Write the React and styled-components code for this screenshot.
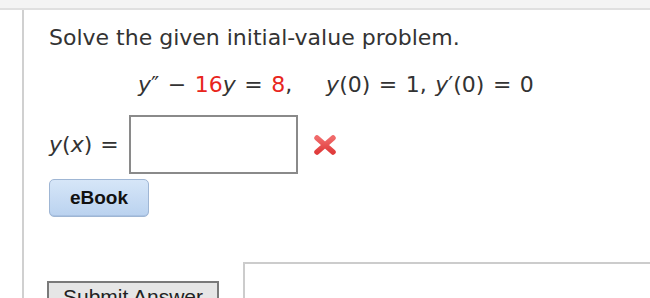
import React from "react";
import styled, { createGlobalStyle } from "styled-components";

const Global = createGlobalStyle`
  html, body { margin: 0; padding: 0; background: #fff; overflow: hidden; }
  body { width: 650px; height: 298px; }
`;

const Page = styled.div`
  width: 650px;
  height: 298px;
  overflow: hidden;
  display: flex;
  flex-direction: column;
`;

const TopBand = styled.div`
  height: 8px;
  flex: none;
  background: #f4f4f4;
  border-bottom: 2px solid #e0e0e0;
`;

const Body = styled.div`
  flex: 1;
  margin-left: 22px;
  border-left: 2px solid #d0d0d0;
  padding-left: 25px;
  display: flex;
  flex-direction: column;
`;

const Title = styled.div`
  font-family: "DejaVu Sans", Verdana, sans-serif;
  font-size: 22px;
  color: #333;
  margin-top: 14px;
  line-height: 28px;
`;

const Equation = styled.div`
  font-family: "DejaVu Sans", Verdana, sans-serif;
  font-size: 22px;
  color: #333;
  margin-top: 19px;
  padding-left: 89px;
  line-height: 28px;
  white-space: pre;
  word-spacing: 1.5px;
`;

const Var = styled.i`
  font-style: italic;
`;

const Red = styled.span`
  color: #e8251c;
`;

const AnswerRow = styled.div`
  display: flex;
  align-items: center;
  margin-top: 16px;
`;

const Label = styled.div`
  font-family: "DejaVu Sans", Verdana, sans-serif;
  font-size: 22px;
  color: #333;
  white-space: pre;
  word-spacing: 1px;
`;

const AnswerBox = styled.div`
  width: 165px;
  height: 55px;
  border: 2px solid #8a8a8a;
  background: #fff;
  margin-left: 10px;
`;

const WrongMark = styled.svg`
  margin-left: 15px;
  width: 24px;
  height: 20px;
`;

const EBookButton = styled.div`
  width: 100px;
  height: 38px;
  margin-top: 5px;
  box-sizing: border-box;
  border: 1px solid #9fb6d4;
  border-radius: 5px;
  background: linear-gradient(#d6e6f8, #bad2ef);
  box-shadow: inset 0 -1px 0 #a9c2e2;
  display: flex;
  align-items: center;
  justify-content: center;
  font-family: "Liberation Sans", Arial, sans-serif;
  font-weight: bold;
  font-size: 19px;
  color: #111;
`;

const BottomRow = styled.div`
  display: flex;
  align-items: flex-start;
  margin-top: 45px;
  margin-left: -2px;
`;

const SubmitButton = styled.div`
  margin-top: 19px;
  width: 172px;
  height: 40px;
  box-sizing: border-box;
  border: 2px solid #7a7a7a;
  background: #e6e6e6;
  font-family: "Liberation Sans", Arial, sans-serif;
  font-size: 21px;
  line-height: 24px;
  color: #222;
  text-align: center;
  padding-top: 2px;
`;

const ResultBox = styled.div`
  margin-left: 24px;
  flex: 1;
  height: 60px;
  border: 2px solid #cccccc;
  border-right: none;
`;

export default function App() {
  return (
    <Page>
      <Global />
      <TopBand />
      <Body>
        <Title>Solve the given initial-value problem.</Title>
        <Equation>
          <Var>y</Var>″ − <Red>16</Red><Var>y</Var> = <Red>8</Red>,    <Var>y</Var>(0) = 1, <Var>y</Var>′(0) = 0
        </Equation>
        <AnswerRow>
          <Label>
            <Var>y</Var>(<Var>x</Var>) =
          </Label>
          <AnswerBox />
          <WrongMark viewBox="0 0 24 20">
            <defs>
              <linearGradient id="xg" x1="0" y1="0" x2="0" y2="1">
                <stop offset="0" stopColor="#f06a6a" />
                <stop offset="1" stopColor="#e03c3c" />
              </linearGradient>
            </defs>
            <path d="M4 3 L20 17 M20 3 L4 17" stroke="url(#xg)" strokeWidth="5.5" strokeLinecap="round" fill="none" />
          </WrongMark>
        </AnswerRow>
        <EBookButton>eBook</EBookButton>
        <BottomRow>
          <SubmitButton>Submit Answer</SubmitButton>
          <ResultBox />
        </BottomRow>
      </Body>
    </Page>
  );
}
